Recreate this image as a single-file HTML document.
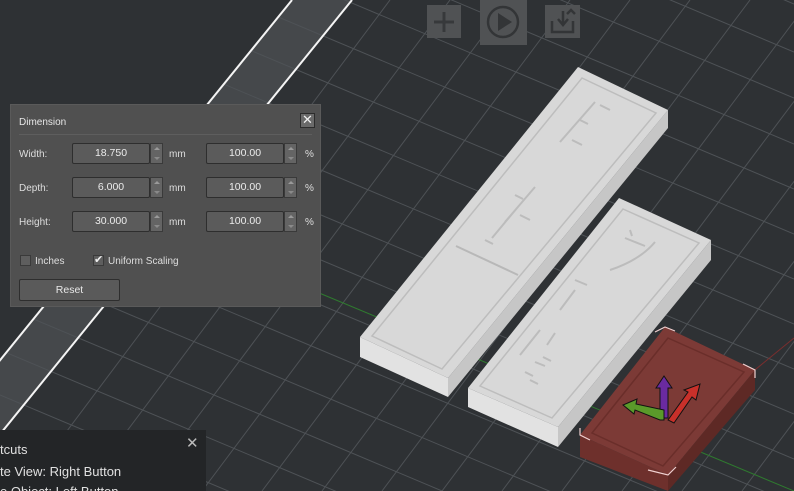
<!DOCTYPE html>
<html><head><meta charset="utf-8"><style>
*{margin:0;padding:0;box-sizing:border-box}
html,body{width:794px;height:491px;overflow:hidden}
body{background:#2e3134;font-family:"Liberation Sans",sans-serif;position:relative}
svg{position:absolute;left:0;top:0}
.panel{position:absolute;left:10px;top:104px;width:311px;height:203px;background:#505050;border:1px solid #5a5a5a}
.panel .t{position:absolute;left:8px;top:12px;font-size:10px;color:#e6e6e6}
.panel .sep{position:absolute;left:8px;right:8px;top:29px;height:1px;background:#3c3c3c;border-bottom:1px solid #5e5e5e}
.x{position:absolute;left:289px;top:8px;width:15px;height:15px;border:1px solid #2c2c2c;background:#6a6a6a;color:#f2f2f2;font-size:13px;line-height:12px;text-align:center}
.lbl{position:absolute;font-size:10px;color:#dedede}
.inp{position:absolute;width:78px;height:21px;background:#5b5b5b;border:1px solid #2e2e2e;border-radius:2px;color:#ececec;font-size:10.5px;text-align:center;line-height:19px}
.sp{position:absolute;width:13px;height:21px;background:#646464;border:1px solid #3a3a3a}
.sp:before,.sp:after{content:"";position:absolute;left:3px;border-left:3px solid transparent;border-right:3px solid transparent}
.sp:before{top:3px;border-bottom:3px solid #9a9a9a}
.sp:after{bottom:3px;border-top:3px solid #8a8a8a}
.cb{position:absolute;width:11px;height:11px;background:#5e5e5e;border:1px solid #3a3a3a}
.btn{position:absolute;left:8px;top:174px;width:101px;height:22px;background:#5a5a5a;border:1px solid #2e2e2e;border-radius:2px;color:#e8e8e8;font-size:10.5px;text-align:center;line-height:20px}
.bl{position:absolute;left:0;top:430px;width:206px;height:61px;background:#232527;overflow:hidden}
.bl div{position:absolute;left:0;font-size:13px;color:#e0e0e0;white-space:nowrap}
.tb{position:absolute;background:#505254}
</style></head><body>
<svg width="794" height="491">
<defs><clipPath id="g"><polygon points="292,0 794,0 794,491 -106,491"/></clipPath></defs>
<polygon points="292,0 352,0 -46,491 -106,491" fill="#45484b"/>
<g clip-path="url(#g)" stroke="#4e5256" stroke-width="1">
<line x1="0" y1="-380" x2="794" y2="-46"/><line x1="0" y1="-330" x2="794" y2="4"/><line x1="0" y1="-282" x2="794" y2="52"/>
<line x1="0" y1="-236" x2="794" y2="98"/><line x1="0" y1="-190" x2="794" y2="144"/><line x1="0" y1="-145" x2="794" y2="189"/>
<line x1="0" y1="-100" x2="794" y2="234"/><line x1="0" y1="-55" x2="794" y2="279"/><line x1="0" y1="-10" x2="794" y2="324"/>
<line x1="0" y1="35" x2="794" y2="369"/><line x1="0" y1="80" x2="794" y2="414"/><line x1="0" y1="125" x2="794" y2="459"/>
<line x1="0" y1="170" x2="794" y2="504"/><line x1="0" y1="215" x2="794" y2="549"/><line x1="0" y1="260" x2="794" y2="594"/>
<line x1="0" y1="305" x2="794" y2="639"/><line x1="0" y1="350" x2="794" y2="684"/><line x1="0" y1="395" x2="794" y2="729"/>
<line x1="0" y1="440" x2="794" y2="774"/>
<line x1="390" y1="0" x2="22" y2="491"/><line x1="450" y1="0" x2="82" y2="491"/><line x1="510" y1="0" x2="142" y2="491"/>
<line x1="570" y1="0" x2="202" y2="491"/><line x1="630" y1="0" x2="262" y2="491"/><line x1="690" y1="0" x2="322" y2="491"/>
<line x1="750" y1="0" x2="382" y2="491"/><line x1="810" y1="0" x2="442" y2="491"/><line x1="870" y1="0" x2="502" y2="491"/>
<line x1="930" y1="0" x2="562" y2="491"/><line x1="990" y1="0" x2="622" y2="491"/><line x1="1050" y1="0" x2="682" y2="491"/>
<line x1="1110" y1="0" x2="742" y2="491"/><line x1="1170" y1="0" x2="802" y2="491"/>
</g>
<line x1="292" y1="0" x2="-106" y2="491" stroke="#f4f4f4" stroke-width="2"/>
<line x1="352" y1="0" x2="-46" y2="491" stroke="#f4f4f4" stroke-width="2"/>
<line x1="300" y1="285" x2="794" y2="491" stroke="#2f7a2f" stroke-width="1"/>
<line x1="794" y1="338" x2="745" y2="378" stroke="#7a2e2e" stroke-width="1"/>
<polygon points="360,337 448,378 448,397 360,357" fill="#e2e2e2"/>
<polygon points="448,378 668,110 668,128 448,397" fill="#c6c6c6"/>
<polygon points="578,67 668,110 448,378 360,337" fill="#d8d8d8"/>
<polygon points="582,78 656,113 442,369 372,336" fill="none" stroke="#bdbdbd" stroke-width="1.5"/>
<line x1="456" y1="246" x2="518" y2="275" stroke="#b8b8b8" stroke-width="2"/>
<g stroke="#bcbcbc" stroke-width="2" fill="none"><path d="M600,105 l10,5 M572,140 l10,5 M560,142 l35,-40 M520,215 l10,5 M505,222 l30,-35 M492,238 l25,-30 M485,240 l8,4 M580,120 l8,4 M515,195 l8,4"/></g>
<polygon points="468,388 558,427 558,447 468,407" fill="#e2e2e2"/>
<polygon points="558,427 711,240 711,260 558,447" fill="#c6c6c6"/>
<polygon points="619,198 711,240 558,427 468,388" fill="#d8d8d8"/>
<polygon points="623,209 699,243 552,418 480,386" fill="none" stroke="#bdbdbd" stroke-width="1.5"/>
<g stroke="#bcbcbc" stroke-width="2" fill="none"><path d="M625,238 l20,8 M630,230 l2,6 M610,270 q30,-10 45,-28 M575,280 l12,5 M560,310 l15,-20 M547,345 l8,-12 M535,362 l10,4 M540,330 l-20,25 M525,372 l8,4 M530,380 l8,4 M543,357 l8,4"/></g>
<polygon points="580,435 668,475 668,491 580,457" fill="#6e302c"/>
<polygon points="668,475 755,370 755,390 668,491" fill="#5e2925"/>
<polygon points="665,327 755,370 668,475 580,435" fill="#7c3a36"/>
<polygon points="668,338 744,372 663,466 592,433" fill="none" stroke="#6a2e2a" stroke-width="1.5"/>
<g stroke="#f0d0d0" stroke-width="1.2" fill="none">
<path d="M655,332 l10,-5 l10,4 M743,364 l12,6 l0,8 M580,428 l0,7 l10,5 M648,470 l20,5 l8,-8"/></g>
<polygon points="660,418 660,388 656,388 664,376 672,388 668,388 668,418" fill="#6a2aa0" stroke="#111" stroke-width="1"/>
<polygon points="668,420 688,392 684,390 700,384 696,400 692,397 674,423" fill="#c8302a" stroke="#111" stroke-width="1"/>
<polygon points="664,420 664,410 636,404 637,399 623,405 634,414 635,410 660,420" fill="#5a9a2a" stroke="#111" stroke-width="1"/>
</svg>
<div class="tb" style="left:427px;top:5px;width:34px;height:33px"><svg width="34" height="33"><path d="M17,7 V27 M7,17 H27" stroke="#37393b" stroke-width="3"/></svg></div>
<div class="tb" style="left:480px;top:0;width:47px;height:45px"><svg width="47" height="45"><circle cx="23" cy="22" r="15" fill="none" stroke="#333537" stroke-width="2.5"/><polygon points="18,13 32,22 18,31" fill="#333537"/></svg></div>
<div class="tb" style="left:545px;top:5px;width:35px;height:33px"><svg width="35" height="33"><path d="M7,16 V27 H28 V16 M13,14 l5,6 l5,-6 M18,6 V19 M22,9 l4,-4 l4,4" stroke="#333537" stroke-width="2.5" fill="none"/></svg></div>
<div class="panel">
<div class="t">Dimension</div><div class="x">✕</div><div class="sep"></div>
<div class="lbl" style="left:8px;top:44px">Width:</div>
<div class="inp" style="left:61px;top:38px">18.750</div><div class="sp" style="left:139px;top:38px"></div>
<div class="lbl" style="left:158px;top:44px">mm</div>
<div class="inp" style="left:195px;top:38px">100.00</div><div class="sp" style="left:273px;top:38px"></div>
<div class="lbl" style="left:294px;top:44px">%</div>
<div class="lbl" style="left:8px;top:78px">Depth:</div>
<div class="inp" style="left:61px;top:72px">6.000</div><div class="sp" style="left:139px;top:72px"></div>
<div class="lbl" style="left:158px;top:78px">mm</div>
<div class="inp" style="left:195px;top:72px">100.00</div><div class="sp" style="left:273px;top:72px"></div>
<div class="lbl" style="left:294px;top:78px">%</div>
<div class="lbl" style="left:8px;top:112px">Height:</div>
<div class="inp" style="left:61px;top:106px">30.000</div><div class="sp" style="left:139px;top:106px"></div>
<div class="lbl" style="left:158px;top:112px">mm</div>
<div class="inp" style="left:195px;top:106px">100.00</div><div class="sp" style="left:273px;top:106px"></div>
<div class="lbl" style="left:294px;top:112px">%</div>
<div class="cb" style="left:9px;top:150px"></div><div class="lbl" style="left:24px;top:151px">Inches</div>
<div class="cb" style="left:82px;top:150px;color:#f0f0f0;font-size:11px;line-height:9px">✔</div><div class="lbl" style="left:97px;top:151px">Uniform Scaling</div>
<div class="btn">Reset</div>
</div>
<div class="bl">
<div style="top:12px">tcuts</div>
<div style="top:34px">te View: Right Button</div>
<div style="top:54px">e Object: Left Button</div>
<div style="left:186px;top:4px;font-size:15px;color:#bbb">✕</div>
</div>
</body></html>
